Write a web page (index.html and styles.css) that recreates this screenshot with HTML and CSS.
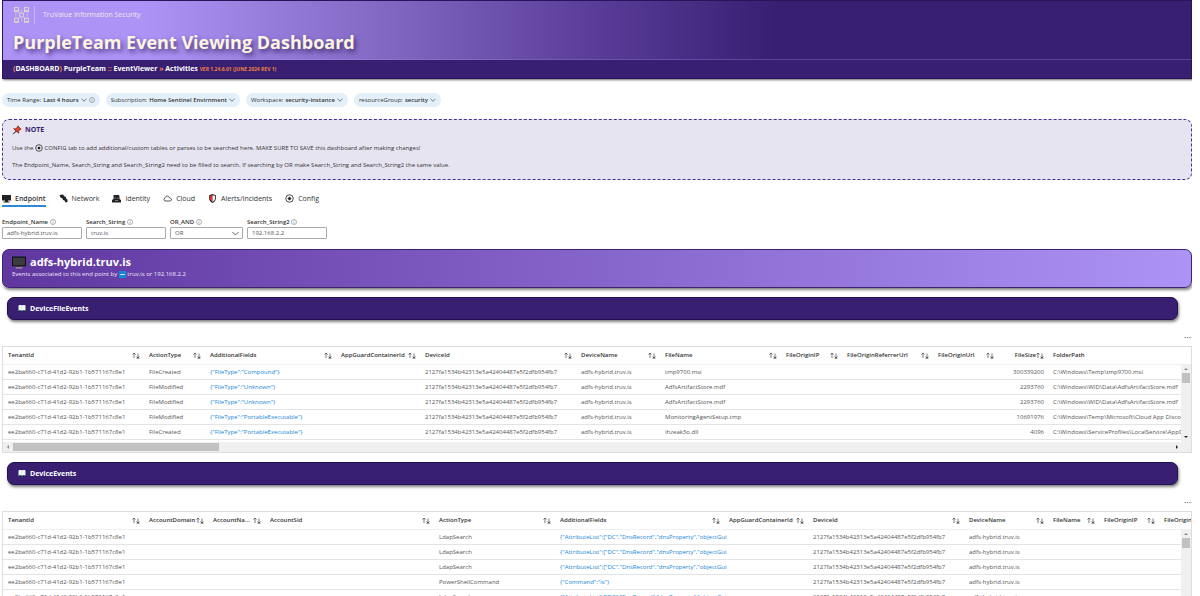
FILE: index.html
```
<!DOCTYPE html>
<html lang="en">
<head>
    <meta charset="UTF-8">
    <meta name="viewport" content="width=device-width, initial-scale=1.0">
    <title>PurpleTeam Event Viewing Dashboard</title>
    <link rel="stylesheet" href="styles.css">
</head>
<body>
    <svg class="sprite" aria-hidden="true">
        <symbol id="i-sort" viewBox="0 0 16 14"><path d="M4 12V2M1 5l3-3 3 3M12 3v9M9 9l3 3 3-3M9 12.500h6" fill="none" stroke="#333" stroke-width="1.300"/></symbol>
        <symbol id="i-info" viewBox="0 0 14 14"><circle cx="7" cy="7" r="6" fill="none" stroke="#555"/><path d="M7 6v4.500M7 3.500v1.300" stroke="#555" stroke-width="1.200"/></symbol>
        <symbol id="i-chev" viewBox="0 0 14 14"><path d="M1 4l6 6 6-6" fill="none" stroke="#333" stroke-width="1.500"/></symbol>
        <symbol id="i-gear" viewBox="0 0 18 18"><circle cx="9" cy="9" r="7.500" fill="none" stroke="#222" stroke-width="1.600"/><circle cx="9" cy="9" r="3" fill="#222"/><path d="M9 4v1M9 13v1M4 9h1M13 9h1" stroke="#222" stroke-width="1.200"/></symbol>
        <symbol id="i-book" viewBox="0 0 18 16"><path d="M0 2h18v13H0z" fill="#16324f"/><path d="M1 1c3-1 6-1 8 0 2-1 5-1 8 0v12c-3-1-6-1-8 0-2-1-5-1-8 0z" fill="#f1f8f5"/><path d="M9 1v12" stroke="#c7dbe0"/></symbol>
    </svg>

    <header class="header">
        <div class="hero">
            <div class="brand">
                <svg class="logo" viewBox="0 0 48 48" fill="none" stroke="#e9dfc4" stroke-width="2.500">
                    <rect x="3" y="2" width="12" height="9"/><rect x="33" y="2" width="12" height="9"/>
                    <rect x="3" y="34" width="12" height="9"/><rect x="33" y="34" width="12" height="9"/>
                    <path d="M1 14h16M31 14h16M1 46h16M31 46h16M14 14l7 7M34 14l-7 7M14 34l7-7M34 34l-7-7"/>
                    <circle cx="24" cy="24" r="6"/><path d="M24 6v10M24 32v10M7 17v14M41 17v14" stroke-width="1.500"/>
                </svg>
                <span class="brand-name">TruValue Information Security</span>
            </div>
            <h1>PurpleTeam Event Viewing Dashboard</h1>
        </div>
        <div class="crumbs"><i>(</i>DASHBOARD<i>)</i> PurpleTeam <i>::</i> EventViewer <i>»</i> Activities <small>VER 1.24.6.01 (JUNE 2024 REV 1)</small></div>
    </header>

    <div class="pills">
        <button class="pill">Time Range: <b>Last 4 hours</b><svg class="chev"><use href="#i-chev"/></svg><svg class="info"><use href="#i-info"/></svg></button>
        <button class="pill">Subscription: <b>Home Sentinel Envirnment</b><svg class="chev"><use href="#i-chev"/></svg></button>
        <button class="pill">Workspace: <b>security-instance</b><svg class="chev"><use href="#i-chev"/></svg></button>
        <button class="pill">resourceGroup: <b>security</b><svg class="chev"><use href="#i-chev"/></svg></button>
    </div>

    <section class="note">
        <h2><svg class="pin" viewBox="0 0 24 24"><path d="M2 22l8-9 2 2z" fill="#555" stroke="#222"/><path d="M14 2l8 8-3 1-3 4v5L4 9h5l4-4z" fill="#e0402a" stroke="#5a1a12" stroke-width="1.500"/></svg>NOTE</h2>
        <p>Use the <svg class="gear"><use href="#i-gear"/></svg> CONFIG tab to add additional/custom tables or parses to be searched here. MAKE SURE TO SAVE this dashboard after making changes!</p>
        <p>The Endpoint_Name, Search_String and Search_String2 need to be filled to search. If searching by OR make Search_String and Search_String2 the same value.</p>
    </section>

    <nav class="tabs">
        <a href="#endpoint" class="active"><svg viewBox="0 0 18 16"><path d="M0 1h18v11H0zM6 12h6v2h3v2H3v-2h3z" fill="#222"/></svg>Endpoint</a>
        <a href="#network"><svg viewBox="0 0 18 16"><path d="M1 1l7-1 3 4 3 1v3l3 2v5l-4 1-2-4-3-1-1-3-4-2z" fill="#222"/></svg>Network</a>
        <a href="#identity"><svg viewBox="0 0 18 16"><path d="M3 1h11l1 3v5l3 2v5H0v-5l3-2z" fill="#222"/><path d="M5 7h3M10 7h3M6 12h6" stroke="#ddd"/></svg>Identity</a>
        <a href="#cloud"><svg viewBox="0 0 18 16"><path d="M4 13a3.200 3.200 0 0 1 0-6c1-5 8-5 9 0 5 0 5 6 1 6z" fill="none" stroke="#222" stroke-width="1.500"/></svg>Cloud</a>
        <a href="#alerts"><svg viewBox="0 0 16 16"><path d="M8 0l6 2v6c0 4-3 6-6 8-3-2-6-4-6-8V2z" fill="#222"/><path d="M8 2v12c-3-2-4.500-3-4.500-6V3z" fill="#e3322d"/><path d="M8 2v12c3-2 4.500-3 4.500-6V3z" fill="#eee"/></svg>Alerts/Incidents</a>
        <a href="#config"><svg viewBox="0 0 18 18"><use href="#i-gear"/></svg>Config</a>
    </nav>

    <form class="filters">
        <div class="field">
            <label for="endpoint">Endpoint_Name <svg class="info"><use href="#i-info"/></svg></label>
            <input id="endpoint" type="text" value="adfs-hybrid.truv.is">
        </div>
        <div class="field">
            <label for="search1">Search_String <svg class="info"><use href="#i-info"/></svg></label>
            <input id="search1" type="text" value="truv.is">
        </div>
        <div class="field narrow">
            <label for="orand">OR_AND <svg class="info"><use href="#i-info"/></svg></label>
            <div class="select">
                <select id="orand"><option>OR</option><option>AND</option></select>
                <svg><use href="#i-chev"/></svg>
            </div>
        </div>
        <div class="field">
            <label for="search2">Search_String2 <svg class="info"><use href="#i-info"/></svg></label>
            <input id="search2" type="text" value="192.168.2.2">
        </div>
    </form>

    <section class="banner">
        <h2><svg viewBox="0 0 26 24"><path d="M1 2h24v16H1z" fill="#3c3c3c" stroke="#111" stroke-width="2"/><path d="M10 18h6v3h-6z" fill="#333"/><path d="M7 21h12v2H7z" fill="#b9b29a"/></svg>adfs-hybrid.truv.is</h2>
        <p>Events associated to this end point by <svg viewBox="0 0 16 16"><path d="M0 0h16v16H0z" fill="#1686dc"/><path d="M3 8h10" stroke="#fff" stroke-width="2"/></svg> truv.is or 192.168.2.2</p>
    </section>

    <section class="events">
        <h3><svg><use href="#i-book"/></svg>DeviceFileEvents</h3>
        <button class="more" aria-label="More">···</button>
        <div class="grid" id="fileEvents"></div>
    </section>

    <section class="events">
        <h3><svg><use href="#i-book"/></svg>DeviceEvents</h3>
        <button class="more" aria-label="More">···</button>
        <div class="grid" id="deviceEvents"></div>
    </section>

    <script>
        const tenant = 'ee2ba660-c71d-41d2-92b1-1b571167c8e1';
        const device = '2127fa1534b42313e5a42404487e5f2dfb954fb7';
        const host = 'adfs-hybrid.truv.is';
        const attrs = '{"AttributeList":["DC","DnsRecord","dnsProperty","objectGui';

        const fileCols = [['TenantId', 141], ['ActionType', 61], ['AdditionalFields', 131], ['AppGuardContainerId', 84], ['DeviceId', 156], ['DeviceName', 84], ['FileName', 121], ['FileOriginIP', 61], ['FileOriginReferrerUrl', 91], ['FileOriginUrl', 65], ['FileSize', 50], ['FolderPath', 200]];
        const fileRows = [
            ['FileCreated', '{"FileType":"Compound"}', 'tmp9700.msi', '300339200', 'C:\\Windows\\Temp\\tmp9700.msi'],
            ['FileModified', '{"FileType":"Unknown"}', 'AdfsArtifactStore.mdf', '2293760', 'C:\\Windows\\WID\\Data\\AdfsArtifactStore.mdf'],
            ['FileModified', '{"FileType":"Unknown"}', 'AdfsArtifactStore.mdf', '2293760', 'C:\\Windows\\WID\\Data\\AdfsArtifactStore.mdf'],
            ['FileModified', '{"FileType":"PortableExecutable"}', 'MonitoringAgentSetup.tmp', '10691976', 'C:\\Windows\\Temp\\Microsoft\\Cloud App Disco'],
            ['FileCreated', '{"FileType":"PortableExecutable"}', 'ihzeak3o.dll', '4096', 'C:\\Windows\\ServiceProfiles\\LocalService\\AppD']
        ].map(r => [tenant, r[0], r[1], '', device, host, r[2], '', '', '', r[3], r[4]]);

        const devCols = [['TenantId', 141], ['AccountDomain', 64], ['AccountNa...', 57], ['AccountSid', 169], ['ActionType', 121], ['AdditionalFields', 169], ['AppGuardContainerId', 84], ['DeviceId', 156], ['DeviceName', 84], ['FileName', 51], ['FileOriginIP', 60], ['FileOriginReferrerUrl', 91]];
        const devRows = [
            ['LdapSearch', attrs],
            ['LdapSearch', attrs],
            ['LdapSearch', attrs],
            ['PowerShellCommand', '{"Command":"is"}'],
            ['LdapSearch', attrs]
        ].map(r => [tenant, '', '', '', r[0], r[1], '', device, host, '', '', '']);

        function drawGrid(id, cols, rows){
            const cls = name => name == 'AdditionalFields' ? 'json' : name == 'FileSize' ? 'num' : '';
            let html = '<div class="view"><table><colgroup>';
            cols.forEach(c => html += `<col style="width:${c[1]}px">`);
            html += '</colgroup><thead><tr>';
            cols.forEach(c => {
                const icon = c[0] == 'FolderPath' ? '' : '<svg><use href="#i-sort"/></svg>';
                html += `<th class="${cls(c[0])}"><button class="sort"><span>${c[0]}</span>${icon}</button></th>`;
            });
            html += '</tr></thead><tbody>';
            rows.forEach(r => {
                html += '<tr>' + r.map((v, i) => `<td class="${cls(cols[i][0])}">${cls(cols[i][0]) == 'json' ? `<a href="#">${v}</a>` : v}</td>`).join('') + '</tr>';
            });
            html += '</tbody></table><div class="vbar"><i class="up"></i><i class="thumb"></i><i class="down"></i></div></div>';
            html += '<div class="hbar"><i class="left"></i><i class="thumb"></i><i class="right"></i></div>';
            document.getElementById(id).innerHTML = html;
        }
        drawGrid('fileEvents', fileCols, fileRows);
        drawGrid('deviceEvents', devCols, devRows);
    </script>
</body>
</html>
```
FILE: styles.css
```
* {
    box-sizing: border-box;
}
body {
    margin: 0 8px 0 2px;
    background-color: white;
    color: #333;
    font-family: "Open Sans", "Noto Sans", sans-serif;
    font-size: 6px;
    line-height: 10px;
}
h1, h2, h3, p {
    margin: 0;
}
button, input, select {
    font: inherit;
    color: inherit;
}
a {
    color: inherit;
    text-decoration: none;
}
.sprite {
    display: none;
}
.info {
    width: 6px;
    height: 6px;
    vertical-align: middle;
}

/* Header */
.header {
    border: 1px solid #2a1459;
    background-color: #381f72;
    box-shadow: 1px 1px 2px rgba(0, 0, 0, 0.6);
}
.hero {
    height: 59px;
    padding: 5px 10px 0;
    background: linear-gradient(90deg, #ad93f5 12%, #8066c0 33%, #593c98 50%, #381f72 65%);
    border-bottom: 1px solid rgba(170, 145, 240, 0.3);
}
.brand {
    display: flex;
    align-items: center;
    gap: 8px;
}
.logo {
    width: 22px;
    height: 18px;
    padding: 1px 4px 1px 0;
    border-right: 1px solid #c9b8ee;
}
.brand-name {
    color: #efe9ea;
    font-size: 7px;
}
h1 {
    margin-top: 4px;
    color: #fdf5e0;
    font-size: 18px;
    line-height: 28px;
    text-shadow: 2px 3px 5px rgba(30, 10, 70, 0.7);
}
.crumbs {
    height: 18px;
    padding-left: 10px;
    color: white;
    font-size: 7px;
    font-weight: bold;
    line-height: 18px;
}
.crumbs i, .crumbs small {
    color: #f08040;
    font-style: normal;
}
.crumbs small {
    font-size: 5px;
}

/* Parameter pills */
.pills {
    display: flex;
    gap: 6px;
    margin-top: 14px;
}
.pill {
    display: flex;
    align-items: center;
    gap: 2px;
    height: 14px;
    padding: 0 5px;
    border: none;
    border-radius: 7px;
    background-color: #e3f0fa;
}
.pill b {
    font-weight: 600;
}
.chev {
    width: 6px;
    height: 6px;
}
.chev, .info {
    overflow: visible;
}

/* Note */
.note {
    height: 61px;
    margin-top: 12px;
    padding: 4px 9px;
    border: 1px dashed #4a2f8f;
    border-radius: 7px;
    background-color: #e7e4f2;
}
.note h2 {
    display: flex;
    align-items: center;
    gap: 3px;
    color: #381f72;
    font-size: 7px;
    line-height: 12px;
}
.note p {
    margin-top: 7px;
}
.pin {
    width: 10px;
    height: 10px;
}
.gear {
    width: 8px;
    height: 8px;
    vertical-align: middle;
}

/* Tabs */
.tabs {
    display: flex;
    gap: 13px;
    margin-top: 12px;
    font-size: 7px;
}
.tabs a {
    display: flex;
    align-items: center;
    gap: 4px;
    height: 15px;
    border-bottom: 2px solid transparent;
}
.tabs a.active {
    border-color: #2a8ad8;
    font-weight: 600;
}
.tabs svg {
    width: 9px;
    height: 9px;
}

/* Filters */
.filters {
    display: flex;
    gap: 4px;
    margin-top: 10px;
}
.field {
    width: 80px;
}
.narrow {
    width: 73px;
}
.field label {
    display: block;
    height: 10px;
    font-weight: 600;
}
.field input, .field select {
    display: block;
    width: 100%;
    height: 12px;
    padding: 0 4px;
    border: 1px solid #aaa;
    border-radius: 1px;
    background-color: white;
    appearance: none;
    color: #555;
}
.select {
    position: relative;
}
.select svg {
    position: absolute;
    top: 3px;
    right: 4px;
    width: 7px;
    height: 7px;
}

/* Endpoint banner */
.banner {
    height: 39px;
    margin-top: 10px;
    padding: 4px 9px;
    border: 1px solid #3c2470;
    border-radius: 7px;
    background: linear-gradient(90deg, #5f379f, #ad93f5);
    box-shadow: 1px 2px 3px rgba(0, 0, 0, 0.5);
    color: #efe6fb;
}
.banner h2 {
    display: flex;
    align-items: center;
    gap: 4px;
    color: white;
    font-size: 11px;
    line-height: 16px;
}
.banner h2 svg {
    width: 14px;
    height: 13px;
}
.banner p {
    line-height: 8px;
}
.banner p svg {
    width: 7px;
    height: 7px;
    vertical-align: middle;
}

/* Event sections */
.events {
    margin-top: 9px;
}
.events h3 {
    display: flex;
    align-items: center;
    gap: 4px;
    height: 23px;
    margin: 0 14px 0 5px;
    padding-left: 10px;
    border: 1px solid #24104f;
    border-radius: 7px;
    background-color: #381f72;
    box-shadow: 1px 2px 3px rgba(0, 0, 0, 0.5);
    color: white;
    font-size: 7px;
}
.events h3 svg {
    width: 8px;
    height: 7px;
}
.more {
    display: block;
    margin: 11px 0 1px auto;
    padding: 0 1px;
    height: 14px;
    border: none;
    background: none;
    font-size: 9px;
    line-height: 10px;
}

/* Grid */
.grid {
    border: 1px solid #ddd;
}
.view {
    position: relative;
    height: 95px;
    overflow: hidden;
}
.grid table {
    width: 0;
    table-layout: fixed;
    border-collapse: collapse;
}
.grid th, .grid td {
    height: 15px;
    padding: 0 4px 0 5px;
    border-bottom: 1px solid #e4e4e4;
    overflow: hidden;
    white-space: nowrap;
    text-align: left;
    line-height: 10px;
}
.grid th {
    height: 17px;
    border-color: #f0f0f0;
}
.grid td {
    color: #555;
}
.grid td.json {
    overflow: visible;
    color: #1a86d6;
}
.grid td.num {
    text-align: right;
}
.sort {
    display: flex;
    align-items: center;
    justify-content: space-between;
    width: 100%;
    padding: 0;
    border: none;
    background: none;
    font-weight: 600;
}
.num .sort {
    justify-content: flex-end;
}
.sort svg {
    flex: none;
    width: 8px;
    height: 7px;
}

/* Scrollbars */
.vbar {
    position: absolute;
    top: 17px;
    right: 0;
    bottom: 0;
    display: flex;
    flex-direction: column;
    align-items: center;
    width: 10px;
    padding: 4px 0;
    background-color: #f0f0f0;
}
.vbar .thumb {
    width: 8px;
    height: 10px;
    margin: 3px 0 auto;
    background-color: #c1c1c1;
}
.up, .down, .left, .right {
    border: 2px solid transparent;
}
.up {
    border-top: none;
    border-bottom-color: #888;
}
.down {
    border-bottom: none;
    border-top-color: #222;
}
.hbar {
    display: flex;
    align-items: center;
    height: 10px;
    padding: 0 13px 0 4px;
    background-color: #f0f0f0;
}
.hbar .thumb {
    width: 206px;
    height: 8px;
    margin: 0 auto 0 4px;
    background-color: #c1c1c1;
}
.left {
    border-left: none;
    border-right-color: #888;
}
.right {
    border-right: none;
    border-left-color: #222;
}
```
